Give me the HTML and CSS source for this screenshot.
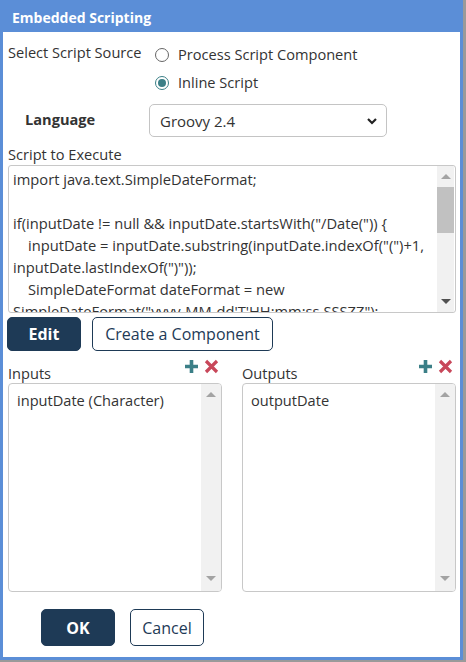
FILE: index.html
```html
<!DOCTYPE html>
<html lang="en">
<head>
    <meta charset="UTF-8">
    <title>Embedded Scripting</title>
    <link rel="stylesheet" href="styles.css">
</head>
<body>
    <div class="dialog">
        <div class="dialog-title">Embedded Scripting</div>
        <div class="dialog-body">
            <div class="source-row">
                <div class="source-label">Select Script Source</div>
                <div class="radio-list">
                    <div class="radio-option"><span class="radio"></span>Process Script Component</div>
                    <div class="radio-option"><span class="radio checked"></span>Inline Script</div>
                </div>
            </div>

            <div class="language-row">
                <div class="language-label">Language</div>
                <div class="select">
                    <span>Groovy 2.4</span>
                    <svg class="chevron" width="12" height="8" viewBox="0 0 12 8"><path d="M2 2 L6 6 L10 2" fill="none" stroke="#222" stroke-width="2.2"/></svg>
                </div>
            </div>

            <div class="field-label">Script to Execute</div>
            <div class="script-box">
                <div class="code">
                    <div class="line">import java.text.SimpleDateFormat;</div>
                    <div class="line">&nbsp;</div>
                    <div class="line">if(inputDate != null &amp;&amp; inputDate.startsWith("/Date(")) {</div>
                    <div class="line indent">inputDate = inputDate.substring(inputDate.indexOf("(")+1,</div>
                    <div class="line">inputDate.lastIndexOf(")"));</div>
                    <div class="line indent">SimpleDateFormat dateFormat = new</div>
                    <div class="line">SimpleDateFormat("yyyy-MM-dd'T'HH:mm:ss.SSSZZ");</div>
                </div>
                <div class="scrollbar">
                    <span class="arrow up"></span>
                    <span class="thumb"></span>
                    <span class="arrow down"></span>
                </div>
            </div>

            <div class="button-row">
                <button class="btn btn-primary btn-edit">Edit</button>
                <button class="btn btn-outline">Create a Component</button>
            </div>

            <div class="lists">
                <div class="list-panel">
                    <div class="list-header">
                        <span class="list-title">Inputs</span>
                        <span class="list-actions">
                            <svg width="15" height="15" viewBox="0 0 15 15"><path d="M7.5 1 V14 M1 7.5 H14" stroke="#3b7f87" stroke-width="3.6"/></svg>
                            <svg width="15" height="15" viewBox="0 0 15 15"><path d="M2 2 L13 13 M13 2 L2 13" stroke="#c8475a" stroke-width="3.2"/></svg>
                        </span>
                    </div>
                    <div class="list-box">
                        <div class="list-items">
                            <div class="list-item">inputDate (Character)</div>
                        </div>
                        <div class="list-scroll">
                            <span class="arrow up"></span>
                            <span class="arrow down"></span>
                        </div>
                    </div>
                </div>
                <div class="list-panel">
                    <div class="list-header">
                        <span class="list-title">Outputs</span>
                        <span class="list-actions">
                            <svg width="15" height="15" viewBox="0 0 15 15"><path d="M7.5 1 V14 M1 7.5 H14" stroke="#3b7f87" stroke-width="3.6"/></svg>
                            <svg width="15" height="15" viewBox="0 0 15 15"><path d="M2 2 L13 13 M13 2 L2 13" stroke="#c8475a" stroke-width="3.2"/></svg>
                        </span>
                    </div>
                    <div class="list-box">
                        <div class="list-items">
                            <div class="list-item">outputDate</div>
                        </div>
                        <div class="list-scroll">
                            <span class="arrow up"></span>
                            <span class="arrow down"></span>
                        </div>
                    </div>
                </div>
            </div>

            <div class="footer">
                <button class="btn btn-primary btn-ok">OK</button>
                <button class="btn btn-outline btn-cancel">Cancel</button>
            </div>
        </div>
    </div>
</body>
</html>
```

FILE: styles.css
```css
body {
    margin: 0;
    background-color: #9a9a9a;
    font-family: 'Open Sans', 'Liberation Sans', sans-serif;
    color: #333;
}

.dialog {
    width: 457px;
    height: 657px;
    border: 3px solid #5b8ed7;
    border-top: none;
    background-color: #fff;
    display: flex;
    flex-direction: column;
}

.dialog-title {
    height: 32px;
    line-height: 35px;
    margin: 0 -3px;
    padding-left: 12px;
    background-color: #5b8ed7;
    color: #fff;
    font-weight: bold;
    font-size: 14px;
}

.dialog-body {
    padding: 0 4px 0 5px;
    display: flex;
    flex-direction: column;
}

/* script source */
.source-row {
    display: flex;
    padding-top: 8px;
    font-size: 14.6px;
}

.source-label {
    width: 147px;
    line-height: 20px;
    margin-top: 2px;
}

.radio-list {
    display: flex;
    flex-direction: column;
}

.radio-option {
    height: 28px;
    display: flex;
    align-items: center;
}

.radio {
    width: 12px;
    height: 12px;
    border: 1px solid #666;
    border-radius: 50%;
    margin-right: 9px;
    margin-top: 2px;
    box-sizing: content-box;
    position: relative;
}

.radio.checked {
    border-color: #3b7f87;
}

.radio.checked::after {
    content: '';
    position: absolute;
    left: 2px;
    top: 2px;
    width: 8px;
    height: 8px;
    border-radius: 50%;
    background-color: #3b7f87;
}

/* language */
.language-row {
    display: flex;
    align-items: center;
    margin-top: 8px;
}

.language-label {
    width: 124px;
    padding-left: 17px;
    font-weight: bold;
    font-size: 14.6px;
    margin-top: -3px;
}

.select {
    width: 218px;
    height: 31px;
    border: 1px solid #c4c4c4;
    border-radius: 5px;
    display: flex;
    align-items: center;
    justify-content: space-between;
    padding: 0 8px 0 10px;
    font-size: 15px;
    box-sizing: content-box;
}

.field-label {
    margin-top: 6px;
    line-height: 22px;
    font-size: 14.6px;
}

/* script area */
.script-box {
    height: 146px;
    border: 1px solid #c8c8c8;
    border-radius: 3px;
    display: flex;
    overflow: hidden;
}

.code {
    flex: 1;
    padding: 2px 4px;
    font-size: 14.7px;
    line-height: 22px;
    white-space: nowrap;
    overflow: hidden;
}

.code .indent {
    padding-left: 15px;
}

.scrollbar {
    width: 17px;
    margin: 0 1px 0 0;
    background-color: #f1f1f1;
    display: flex;
    flex-direction: column;
    align-items: center;
}

.scrollbar .thumb {
    width: 17px;
    height: 46px;
    background-color: #c1c1c1;
}

.scrollbar .arrow.down {
    margin-top: auto;
}

.arrow {
    width: 0;
    height: 0;
    border-left: 5px solid transparent;
    border-right: 5px solid transparent;
    margin: 8px 0;
}

.arrow.up {
    border-bottom: 5px solid #a3a3a3;
}

.arrow.down {
    border-top: 5px solid #505050;
}

/* buttons */
.button-row {
    display: flex;
    gap: 11px;
    margin-top: 4px;
    margin-left: -1px;
}

.btn {
    font-family: 'Open Sans', 'Liberation Sans', sans-serif;
    font-size: 16px;
    height: 34px;
    border-radius: 5px;
    cursor: pointer;
    padding: 0;
}

.btn-primary {
    background-color: #1e3a56;
    border: 1px solid #1e3a56;
    color: #fff;
    font-weight: bold;
}

.btn-outline {
    background-color: #fff;
    border: 1px solid #1e3a56;
    color: #1e3a56;
}

.btn-edit {
    width: 74px;
}

.button-row .btn-outline {
    width: 181px;
}

/* inputs / outputs */
.lists {
    display: flex;
    gap: 20px;
}

.list-panel {
    width: 214px;
}

.list-header {
    height: 32px;
    display: flex;
    justify-content: space-between;
    align-items: flex-end;
}

.list-title {
    font-size: 14.6px;
    line-height: 20px;
}

.list-actions {
    display: flex;
    gap: 5px;
    align-self: flex-start;
    margin-top: 8px;
    margin-right: 3px;
}

.list-box {
    height: 207px;
    border: 1px solid #c8c8c8;
    border-radius: 4px;
    display: flex;
    overflow: hidden;
}

.list-items {
    flex: 1;
    padding: 5px 8px;
    font-size: 14.6px;
    line-height: 22px;
}

.list-scroll {
    width: 20px;
    background-color: #f1f1f1;
    display: flex;
    flex-direction: column;
    align-items: center;
}

.list-scroll .arrow {
    margin: 8px 0 10px;
}

.list-scroll .arrow.down {
    margin-top: auto;
    border-top-color: #a3a3a3;
}

/* footer */
.footer {
    display: flex;
    gap: 15px;
    margin-top: 17px;
    margin-left: 33px;
}

.footer .btn {
    height: 37px;
    width: 74px;
}
```
